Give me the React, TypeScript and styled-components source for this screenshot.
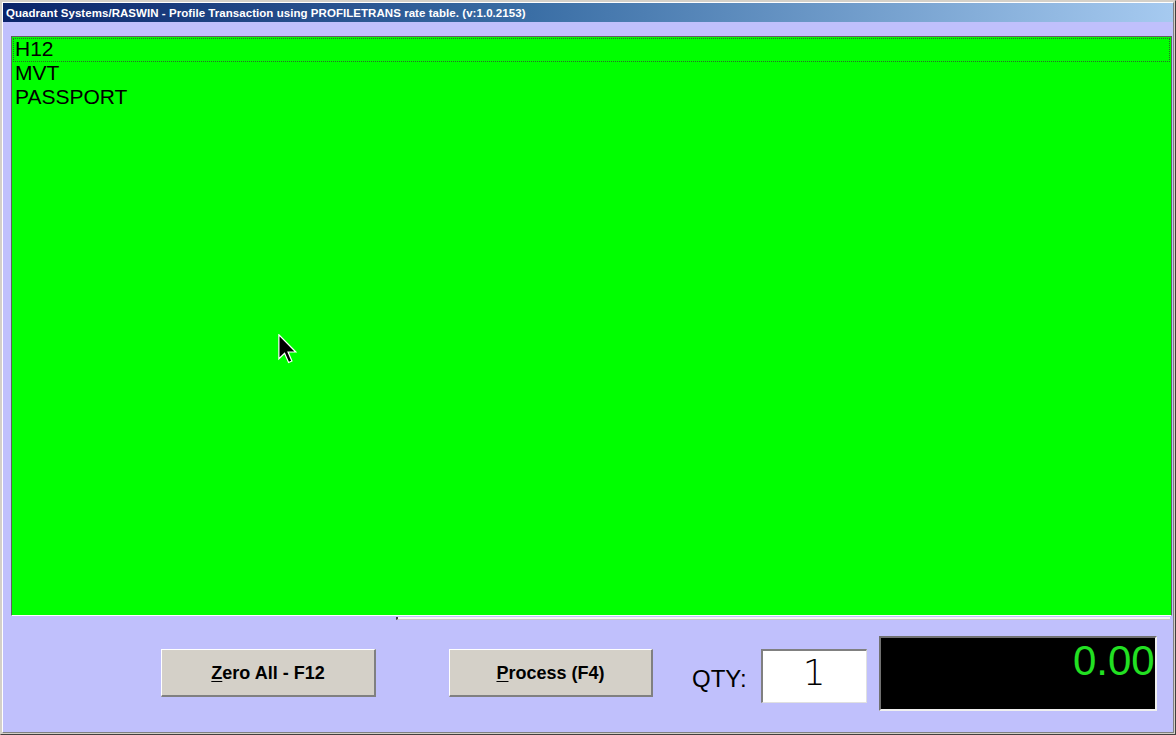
import React from 'react';
import styled, { createGlobalStyle } from 'styled-components';

const GlobalStyle = createGlobalStyle`
  html, body {
    margin: 0;
    padding: 0;
    background: #d4d0c8;
    overflow: hidden;
  }
`;

const WindowFrame = styled.div`
  position: relative;
  width: 1176px;
  height: 735px;
  box-sizing: border-box;
  border-top: 1px solid #d4d0c8;
  border-left: 1px solid #d4d0c8;
  border-right: 1px solid #404040;
  border-bottom: 1px solid #404040;
  background: #d4d0c8;
  display: flex;
  flex-direction: column;
`;

const FrameInner = styled.div`
  flex: 1;
  display: flex;
  flex-direction: column;
  margin: 1px;
  border-top: 1px solid #ffffff;
  border-left: 1px solid #ffffff;
  border-right: 1px solid #808080;
  border-bottom: 1px solid #808080;
`;

const TitleBar = styled.div`
  height: 19px;
  display: flex;
  align-items: center;
  padding-left: 3px;
  background: linear-gradient(to right, #0a246a 0%, #3a6ea5 45%, #a6caf0 100%);
  color: #ffffff;
  font-family: "Liberation Sans", Arial, sans-serif;
  font-weight: bold;
  font-size: 11.5px;
  letter-spacing: 0.05px;
  white-space: nowrap;
`;

const ClientArea = styled.div`
  flex: 1;
  display: flex;
  flex-direction: column;
  background: #c0c0fc;
  padding: 14px 0 0 8px;
`;

const ListBox = styled.div`
  width: 1161px;
  height: 580px;
  box-sizing: border-box;
  background: #00ff00;
  border-top: 1px solid #606060;
  border-left: 1px solid #606060;
  border-right: 1px solid #606060;
  border-bottom: 1px solid #ffffff;
  padding: 1px 1px 0 1px;
  font-family: "Liberation Sans", Arial, sans-serif;
  font-size: 21px;
  color: #000000;
`;

const ListRow = styled.div<{ $focused?: boolean }>`
  height: 24px;
  line-height: 20px;
  padding-left: 1px;
  box-sizing: border-box;
  border: 1px dotted ${(p) => (p.$focused ? '#2a6a2a' : 'transparent')};
`;

const ScrollStrip = styled.div`
  margin: 1px 0 0 385px;
  width: 772px;
  height: 2px;
  background: #f4f4f4;
  border-left: 2px solid #404040;
  border-bottom: 1px solid #c8c8c8;
`;

const ControlRow = styled.div`
  display: flex;
  align-items: flex-start;
  margin-top: 16px;
`;

const PushButton = styled.button<{ $ml: number; $w: number }>`
  margin-left: ${(p) => p.$ml}px;
  margin-top: 13px;
  width: ${(p) => p.$w}px;
  height: 48px;
  background: #d4d0c8;
  border-top: 1px solid #ffffff;
  border-left: 1px solid #ffffff;
  border-right: 2px solid #808080;
  border-bottom: 2px solid #808080;
  font-family: "Liberation Sans", Arial, sans-serif;
  font-weight: bold;
  font-size: 18px;
  color: #000000;
  padding: 2px 0 0 0;
  cursor: default;

  u {
    text-decoration: underline;
    text-underline-offset: 2px;
  }
`;

const QtyLabel = styled.span`
  margin-left: 39px;
  margin-top: 29px;
  font-family: "Liberation Sans", Arial, sans-serif;
  font-size: 24px;
  color: #000000;
`;

const QtyBox = styled.div`
  margin-left: 14px;
  margin-top: 13px;
  width: 106px;
  height: 54px;
  box-sizing: border-box;
  background: #ffffff;
  border-top: 2px solid #808080;
  border-left: 2px solid #808080;
  border-right: 1px solid #e0e0e0;
  border-bottom: 1px solid #e0e0e0;
  display: flex;
  align-items: flex-start;
  justify-content: center;
  padding-top: 2px;
  font-family: "DejaVu Sans", sans-serif;
  font-weight: 200;
  font-size: 36px;
  line-height: 40px;
  color: #000000;
`;

const TotalDisplay = styled.div`
  margin-left: 12px;
  width: 278px;
  height: 75px;
  box-sizing: border-box;
  background: #000000;
  border-top: 2px solid #707070;
  border-left: 2px solid #707070;
  border-right: 2px solid #f0f0f0;
  border-bottom: 2px solid #f0f0f0;
  display: flex;
  justify-content: flex-end;
  align-items: flex-start;
  padding-right: 0;
  font-family: "Liberation Sans", Arial, sans-serif;
  font-size: 42px;
  line-height: 46px;
  color: #22e022;
`;

const Pointer = styled.svg`
  position: absolute;
  left: 277px;
  top: 333px;
`;

export default function App() {
  return (
    <>
      <GlobalStyle />
      <WindowFrame>
        <FrameInner>
          <TitleBar>
            Quadrant Systems/RASWIN - Profile Transaction using PROFILETRANS rate table. (v:1.0.2153)
          </TitleBar>
          <ClientArea>
            <ListBox>
              <ListRow $focused>H12</ListRow>
              <ListRow>MVT</ListRow>
              <ListRow>PASSPORT</ListRow>
            </ListBox>
            <ScrollStrip />
            <ControlRow>
              <PushButton $ml={150} $w={215}>
                <u>Z</u>ero All - F12
              </PushButton>
              <PushButton $ml={73} $w={204}>
                <u>P</u>rocess (F4)
              </PushButton>
              <QtyLabel>QTY:</QtyLabel>
              <QtyBox>1</QtyBox>
              <TotalDisplay>0.00</TotalDisplay>
            </ControlRow>
          </ClientArea>
        </FrameInner>
        <Pointer width="19" height="30" viewBox="0 0 12.5 20">
          <path
            d="M0.5 0.5 L0.5 16.5 L4.3 12.8 L7 19 L9.2 18 L6.6 12 L11.8 12 Z"
            fill="#000000"
            stroke="#ffffff"
            strokeWidth="0.8"
            strokeLinejoin="miter"
          />
        </Pointer>
      </WindowFrame>
    </>
  );
}
